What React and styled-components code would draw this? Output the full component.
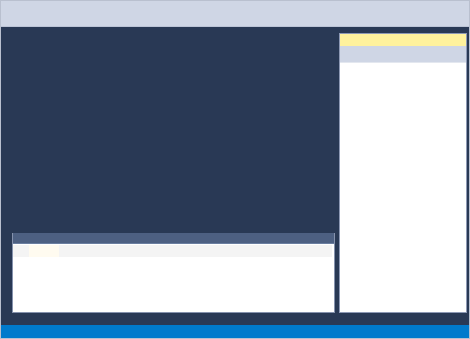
import styled, { createGlobalStyle } from 'styled-components';

const Global = createGlobalStyle`
  html, body { margin: 0; padding: 0; }
  body { font-family: "Liberation Sans", Arial, sans-serif; background: #293955; }
  #root { width: 470px; height: 339px; }
`;

const Shell = styled.div`
  width: 470px;
  height: 339px;
  box-sizing: border-box;
  border: 1px solid #b9c0cf;
  display: flex;
  flex-direction: column;
  background: #293955;
`;

const TopBar = styled.div`
  height: 25px;
  flex: none;
  background: #cfd6e5;
  border-bottom: 1px solid #bcc4d6;
`;

const Workspace = styled.div`
  flex: 1;
  display: flex;
  gap: 4px;
  padding: 6px 2px 12px 11px;
  min-height: 0;
`;

const LeftColumn = styled.div`
  flex: 1;
  display: flex;
  flex-direction: column;
  justify-content: flex-end;
`;

const OutputPanel = styled.div`
  height: 79px;
  display: flex;
  flex-direction: column;
  background: #fff;
  border: 1px solid #8592ad;
  border-top: none;
`;

const PanelTitle = styled.div`
  height: 10px;
  background: #4d6082;
  border-bottom: 1px solid #6a7ea0;
`;

const TabStrip = styled.div`
  height: 12px;
  margin: 1px 2px 0 0;
  background: #f4f4f4;
  display: flex;
  padding-left: 16px;
`;

const Tab = styled.div`
  width: 30px;
  background: ${p => (p.$active ? '#fffbf0' : 'transparent')};
`;

const SidePanel = styled.div`
  width: 128px;
  display: flex;
  flex-direction: column;
  background: #fff;
  border: 1px solid #8d99b5;
  box-sizing: border-box;
`;

const SideTitle = styled.div`
  height: 12px;
  background: #fff29d;
`;

const SideToolbar = styled.div`
  height: 16px;
  background: #cfd6e5;
  border-bottom: 1px solid #e3e7ef;
`;

const StatusBar = styled.div`
  height: 13px;
  flex: none;
  background: #007acc;
`;

export default function App() {
  return (
    <>
      <Global />
      <Shell>
        <TopBar />
        <Workspace>
          <LeftColumn>
            <OutputPanel>
              <PanelTitle />
              <TabStrip>
                <Tab $active />
              </TabStrip>
            </OutputPanel>
          </LeftColumn>
          <SidePanel>
            <SideTitle />
            <SideToolbar />
          </SidePanel>
        </Workspace>
        <StatusBar />
      </Shell>
    </>
  );
}
